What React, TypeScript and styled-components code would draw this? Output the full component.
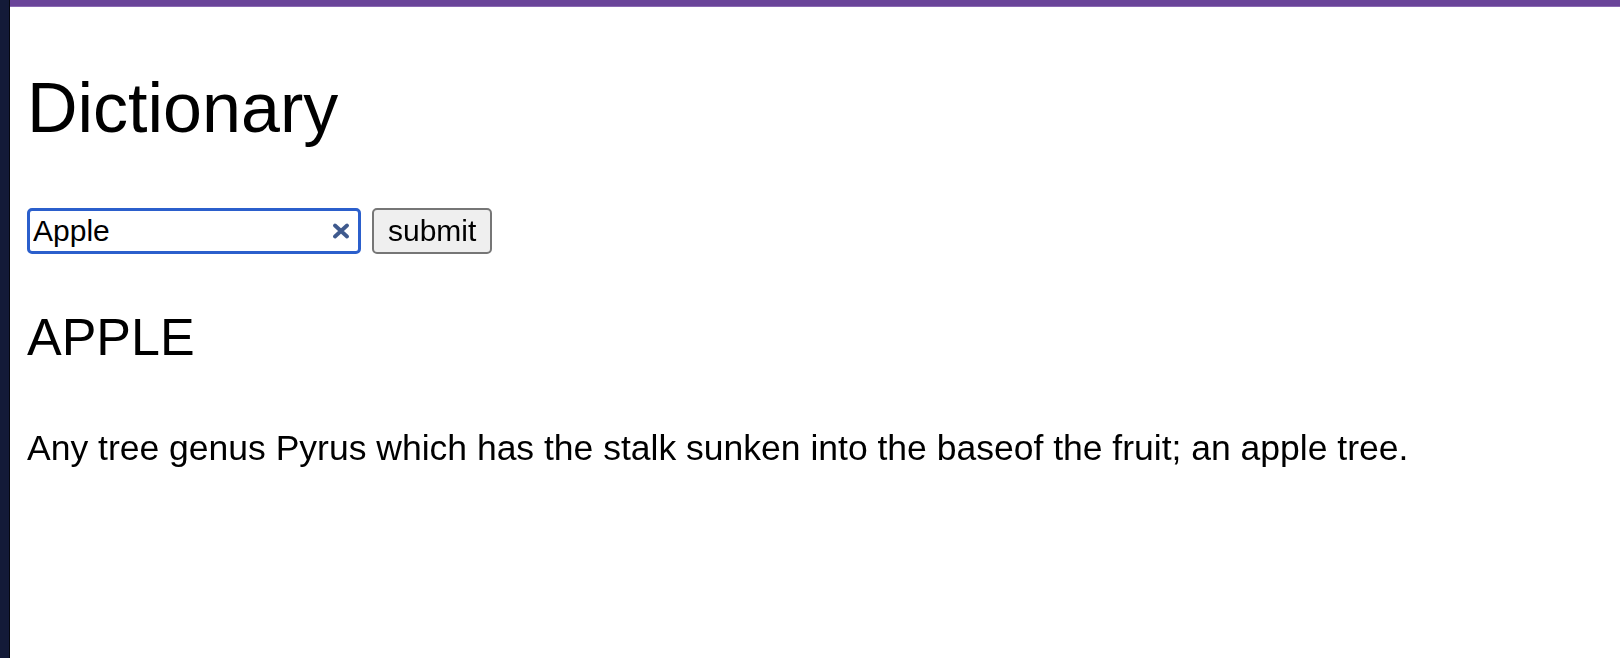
import React from "react";
import styled, { createGlobalStyle } from "styled-components";

const GlobalStyle = createGlobalStyle`
  html, body {
    margin: 0;
    padding: 0;
    background: #ffffff;
    font-family: "Liberation Sans", Arial, sans-serif;
    color: #000000;
  }
`;

const Frame = styled.div`
  display: flex;
  min-height: 658px;
`;

const SideStrip = styled.div`
  width: 9px;
  flex: 0 0 9px;
  background: #131a38;
  border-right: 1px solid #05070f;
`;

const Page = styled.div`
  flex: 1;
  display: flex;
  flex-direction: column;
`;

const TopBar = styled.div`
  height: 6px;
  background: #6a4499;
  border-bottom: 1px solid #8a69b3;
`;

const Content = styled.main`
  padding: 66px 17px 0 17px;
  display: flex;
  flex-direction: column;
`;

const Title = styled.h1`
  margin: 0;
  font-size: 70px;
  line-height: 1;
  font-weight: 400;
`;

const SearchForm = styled.form`
  display: flex;
  align-items: center;
  gap: 11px;
  margin-top: 65px;
`;

const SearchBox = styled.label`
  display: flex;
  align-items: center;
  box-sizing: border-box;
  width: 334px;
  height: 46px;
  border: 3px solid #2b5fcc;
  border-radius: 5px;
  padding: 0 8px 0 3px;
  background: #fff;
`;

const SearchInput = styled.input`
  flex: 1;
  min-width: 0;
  border: none;
  outline: none;
  padding: 0;
  font-family: "Liberation Sans", Arial, sans-serif;
  font-size: 30px;
  color: #000;
  background: transparent;
  caret-color: #000;
`;

const ClearButton = styled.span`
  display: flex;
  align-items: center;
  justify-content: center;
  width: 19px;
  height: 19px;
`;

const SubmitButton = styled.button`
  box-sizing: border-box;
  height: 46px;
  padding: 0 14px;
  border: 2px solid #767676;
  border-radius: 5px;
  background: #efefef;
  font-family: "Liberation Sans", Arial, sans-serif;
  font-size: 30px;
  color: #000;
`;

const WordHeading = styled.h2`
  margin: 57px 0 0 0;
  font-size: 52px;
  line-height: 1;
  font-weight: 400;
`;

const Definition = styled.p`
  margin: 68px 0 0 0;
  font-size: 35.5px;
  line-height: 1;
`;

export default function App() {
  return (
    <>
      <GlobalStyle />
      <Frame>
        <SideStrip />
        <Page>
          <TopBar />
          <Content>
            <Title>Dictionary</Title>
            <SearchForm onSubmit={(e) => e.preventDefault()}>
              <SearchBox>
                <SearchInput type="text" defaultValue="Apple" autoFocus />
                <ClearButton aria-label="clear">
                  <svg width="18" height="16" viewBox="0 0 18 16">
                    <path
                      d="M3 2.5 L15 13.5 M15 2.5 L3 13.5"
                      stroke="#3f5a8e"
                      strokeWidth="3.8"
                      strokeLinecap="round"
                    />
                  </svg>
                </ClearButton>
              </SearchBox>
              <SubmitButton type="submit">submit</SubmitButton>
            </SearchForm>
            <WordHeading>APPLE</WordHeading>
            <Definition>
              Any tree genus Pyrus which has the stalk sunken into the baseof the fruit; an apple tree.
            </Definition>
          </Content>
        </Page>
      </Frame>
    </>
  );
}
